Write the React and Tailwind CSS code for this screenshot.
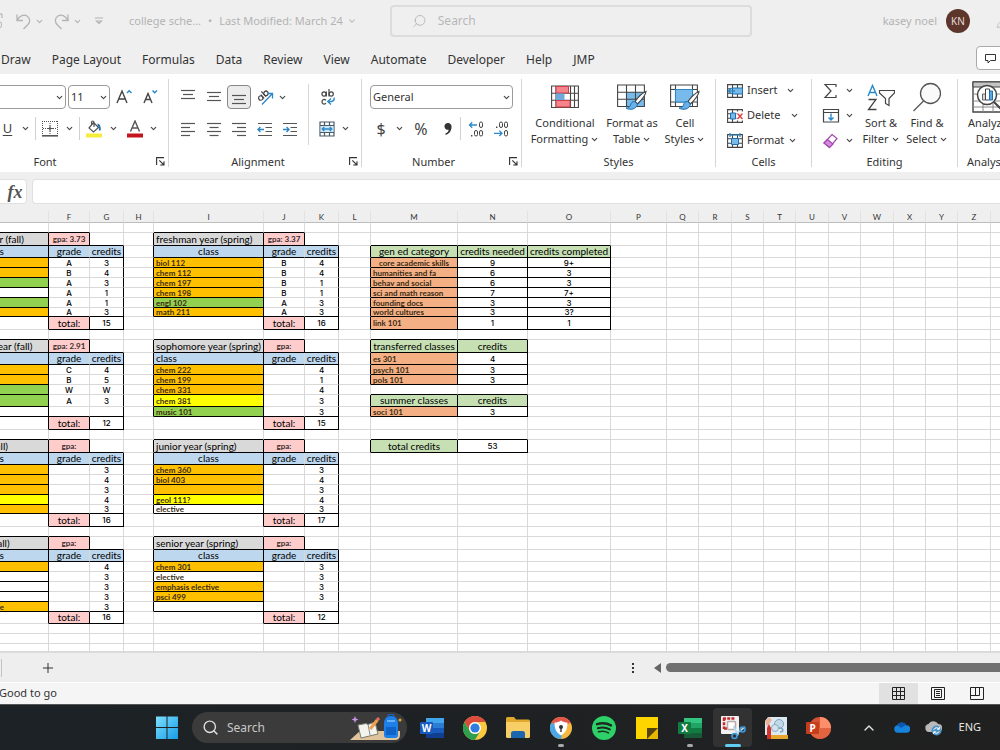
import React from "react";
import { ChevronDown, ChevronUp, Search, Plus, Pencil } from "lucide-react";

/* ---------- sheet data ---------- */

const COLUMNS = [
  ["E", 110], ["F", 41], ["G", 34], ["H", 30], ["I", 110], ["J", 41], ["K", 34], ["L", 32],
  ["M", 87], ["N", 70], ["O", 83], ["P", 56], ["Q", 32], ["R", 33], ["S", 32], ["T", 32],
  ["U", 33], ["V", 32], ["W", 33], ["X", 32], ["Y", 32], ["Z", 33], ["AA", 32],
];
const E = 0, I = 4, M = 8, N = 9, O = 10;

const ROW_HEIGHTS = [
  10, 13, 12, 10, 10, 10, 10, 10, 9, 13, 10, 13, 12, 10, 10, 10, 12, 10, 13, 10, 13,
  12, 10, 10, 10, 10, 9, 13, 10, 13, 12, 10, 10, 10, 10, 10, 12, 10, 10, 8,
];
const HEIGHT_CLASS = { 8: "h-[8px]", 9: "h-[9px]", 10: "h-[10px]", 12: "h-[12px]", 13: "h-[13px]" };

const FILL = {
  o: "bg-[#ffc000]", g: "bg-[#92d050]", y: "bg-[#ffff00]", w: "bg-white",
  grey: "bg-[#d9d9d9]", blue: "bg-[#bdd7ee]", pink: "bg-[#ffcccc]",
  mint: "bg-[#c6e0b4]", salmon: "bg-[#f4b084]",
};

const cells = {};
const put = (row, col, text, fill, edges, style) => {
  cells[row + ":" + col] = { text, fill: FILL[fill], edges, style };
};
const SMALL = "font-['Inter',sans-serif] text-[8px] leading-[8px] font-medium text-center";
const NAME = "text-[8px] leading-[8px] font-bold text-[#3a2c14]";
const SMALL_LEFT = NAME + " text-left pl-[2px]";
const TOTAL = "font-['Inter',sans-serif] text-[8px] leading-[11px] font-medium text-center";
const LARGE = "text-[10px] leading-[11px] text-center";
const LARGE_LEFT = "text-[10px] leading-[11px] text-left pl-[2px]";

function semester(row, col, title, gpa, classes, total, headLeft) {
  put(row, col, title, "grey", "tlrb", LARGE_LEFT);
  put(row, col + 1, gpa, "pink", "tlrb", "text-[8px] leading-[11px] font-bold text-[#3a2c2c] text-center");
  put(row + 1, col, "class", "blue", "tlrb", headLeft ? LARGE_LEFT : LARGE);
  put(row + 1, col + 1, "grade", "blue", "tb", LARGE);
  put(row + 1, col + 2, "credits", "blue", "trb", LARGE);
  classes.forEach(([name, fill, grade, credits], i) => {
    put(row + 2 + i, col, name, fill, "tlrb", SMALL_LEFT);
    put(row + 2 + i, col + 1, grade, "w", "l", SMALL);
    put(row + 2 + i, col + 2, credits, "w", "r", SMALL);
  });
  const end = row + 2 + classes.length;
  put(end, col + 1, "total:", "pink", "tlrb", LARGE);
  put(end, col + 2, total, "w", "tlrb", TOTAL);
}

semester(1, E, "freshman year (fall)", "gpa: 3.73", [
  ["", "o", "A", "3"], ["", "o", "B", "4"], ["", "g", "A", "3"],
  ["", "w", "A", "1"], ["", "g", "A", "1"], ["", "o", "A", "3"],
], "15");
semester(1, I, "freshman year (spring)", "gpa: 3.37", [
  ["biol 112", "o", "B", "4"], ["chem 112", "o", "B", "4"], ["chem 197", "o", "B", "1"],
  ["chem 198", "o", "B", "1"], ["engl 102", "g", "A", "3"], ["math 211", "o", "A", "3"],
], "16");
semester(11, E, "sophomore year (fall)", "gpa: 2.91", [
  ["", "o", "C", "4"], ["", "o", "B", "5"], ["", "g", "W", "W"], ["", "g", "A", "3"], ["", "w", "", ""],
], "12", true);
semester(11, I, "sophomore year (spring)", "gpa:", [
  ["chem 222", "o", "", "4"], ["chem 199", "o", "", "1"], ["chem 331", "o", "", "4"],
  ["chem 381", "y", "", "3"], ["music 101", "g", "", "3"],
], "15", true);
semester(20, E, "junior year (fall)", "gpa:", [
  ["", "o", "", "3"], ["", "o", "", "4"], ["", "o", "", "3"], ["", "y", "", "4"], ["", "o", "", "3"],
], "16");
semester(20, I, "junior year (spring)", "gpa:", [
  ["chem 360", "o", "", "3"], ["biol 403", "o", "", "4"], ["", "o", "", "3"],
  ["geol 111?", "y", "", "4"], ["elective", "w", "", "3"],
], "17");
semester(29, E, "senior year (fall)", "gpa:", [
  ["", "o", "", "4"], ["", "w", "", "3"], ["", "w", "", "3"], ["", "w", "", "3"],
  ["emphasis elective", "o", "", "3"],
], "16");
semester(29, I, "senior year (spring)", "gpa:", [
  ["chem 301", "o", "", "3"], ["elective", "w", "", "3"], ["emphasis elective", "o", "", "3"],
  ["psci 499", "o", "", "3"], ["", "w", "", ""],
], "12");

["gen ed category", "credits needed", "credits completed"].forEach((t, i) => put(2, M + i, t, "mint", "tlrb", LARGE));
[
  ["core academic skills", "9", "9+"], ["humanities and fa", "6", "3"], ["behav and social", "6", "3"],
  ["sci and math reason", "7", "7+"], ["founding docs", "3", "3"], ["world cultures", "3", "3?"], ["link 101", "1", "1"],
].forEach(([name, needed, done], i) => {
  put(3 + i, M, name, "salmon", "tlrb", i === 0 ? NAME + " text-center" : SMALL_LEFT);
  put(3 + i, N, needed, "w", "tlrb", SMALL);
  put(3 + i, O, done, "w", "tlrb", SMALL);
});
function creditList(row, title, items) {
  put(row, M, title, "mint", "tlrb", LARGE);
  put(row, N, "credits", "mint", "tlrb", LARGE);
  items.forEach(([name, credits], i) => {
    put(row + 1 + i, M, name, "salmon", "tlrb", SMALL_LEFT);
    put(row + 1 + i, N, credits, "w", "tlrb", SMALL);
  });
}
creditList(11, "transferred classes", [["es 301", "4"], ["psych 101", "3"], ["pols 101", "3"]]);
creditList(16, "summer classes", [["soci 101", "3"]]);
put(20, M, "total credits", "mint", "tlrb", LARGE);
put(20, N, "53", "w", "tlrb", TOTAL);

const has = (row, col, edge) => (cells[row + ":" + col]?.edges ?? "").includes(edge);

function Sheet() {
  return (
    <main className="overflow-hidden bg-white font-['Lato',sans-serif] text-black">
      <table className="-ml-[61px] w-[1062px] table-fixed border-separate border-spacing-0">
        <colgroup>
          {COLUMNS.map(([name, width]) => <col key={name} style={{ width }} />)}
        </colgroup>
        <thead>
          <tr>
            {COLUMNS.map(([name]) => (
              <th key={name} scope="col" className="h-[12px] border-r border-b border-r-[#e2e2e2] border-b-[#bdbdbd] bg-[#efefef] p-0 text-[8px] leading-[10px] font-normal text-[#333]">
                {name}
              </th>
            ))}
          </tr>
        </thead>
        <tbody>
          {ROW_HEIGHTS.map((height, r) => (
            <tr key={r}>
              {COLUMNS.map(([name], c) => {
                const cell = cells[r + ":" + c];
                const right = has(r, c, "r") || has(r, c + 1, "l") ? "border-r-black" : "border-r-[#d9d9d9]";
                const bottom = has(r, c, "b") || has(r + 1, c, "t") ? "border-b-black" : "border-b-[#d9d9d9]";
                return (
                  <td key={name} className={`overflow-hidden border-r border-b p-0 align-middle whitespace-nowrap ${HEIGHT_CLASS[height]} ${right} ${bottom} ${cell ? cell.fill + " " + cell.style : ""}`}>
                    {cell?.text}
                  </td>
                );
              })}
            </tr>
          ))}
        </tbody>
      </table>
    </main>
  );
}

/* ---------- shared pieces ---------- */

const Chev = ({ className = "" }) => <ChevronDown size={9} strokeWidth={3} className={`shrink-0 text-[#444] ${className}`} />;

const IconButton = ({ label, className, children }) => (
  <button type="button" aria-label={label} className={`flex h-[23px] shrink-0 items-center justify-center ${className}`}>{children}</button>
);
const More = ({ label, className = "w-[14px]" }) => <IconButton label={label + " options"} className={className}><Chev /></IconButton>;
const Rule = ({ className = "" }) => <span className={`h-[23px] w-px shrink-0 bg-[#d0d0d0] ${className}`} />;

const Launcher = ({ label }) => (
  <button type="button" aria-label={label} className="absolute right-[3px] bottom-px">
    <svg width="9" height="9" viewBox="0 0 9 9" fill="none" stroke="#333" strokeWidth="1.1">
      <path d="M.6 8V.6H8M3.3 3.3 8 8M8 4.2V8H4.2" />
    </svg>
  </button>
);

function Group({ name, className, launcher, children }) {
  return (
    <section aria-label={name} className={`relative my-[5px] flex shrink-0 flex-col border-r border-[#d6d6d6] ${className}`}>
      <div className="h-[76px] shrink-0">{children}</div>
      <h2 className="text-center text-[11px] leading-[14px] text-[#333]">{name}</h2>
      {launcher && <Launcher label={name + " settings"} />}
    </section>
  );
}

function BigButton({ icon, lines, chevron = true, className }) {
  return (
    <button type="button" className={`flex shrink-0 flex-col items-center text-[11px] leading-4 whitespace-nowrap text-[#333] ${className}`}>
      <span className="flex h-[36px] items-center justify-center">{icon}</span>
      <span>{lines[0]}</span>
      <span className="flex items-center gap-0.5">{lines[1]}{chevron && <Chev />}</span>
    </button>
  );
}

/* ---------- ribbon icons ---------- */

function Lines({ rows }) {
  return (
    <svg width="16" height="16" viewBox="0 0 16 16" stroke="#555" strokeWidth="1.2">
      {rows.map(([x1, x2, y]) => <path key={y} d={`M${x1} ${y}H${x2}`} />)}
    </svg>
  );
}
const full = [1, 15];
const short = { left: [1, 10], center: [3.5, 12.5], right: [6, 15] };
const para = (k) => [[...full, 2.5], [...short[k], 6.5], [...full, 10.5], [...short[k], 14.5]];

const Indent = ({ out }) => (
  <svg width="16" height="16" viewBox="0 0 16 16" fill="none" stroke="#555" strokeWidth="1.2">
    <path d="M1 2.5h14M8.5 6.5H15M8.5 10.5H15M1 14.5h14" />
    <path d={out ? "M7 8.5H1M3.4 6 1 8.5 3.4 11" : "M1 8.5h6M4.6 6 7 8.5 4.6 11"} stroke="#2b88c8" strokeWidth="1.4" />
  </svg>
);

const UndoIcon = () => (
  <svg width="17" height="17" viewBox="0 0 17 17" fill="none" stroke="currentColor" strokeWidth="1.3">
    <path d="M2 1.500v6h6M2 7.500C4.500 2.500 9 1 12.300 3.200c3 2 3 5.800.7 8.300L8.500 16" />
  </svg>
);
const BordersIcon = () => (
  <svg width="16" height="16" viewBox="0 0 16 16" fill="none" stroke="#555">
    <path d="M.5 0v14M15.500 0v14M0 .5h16" strokeDasharray="1 1" />
    <path d="M8 2v12" strokeDasharray="1 1" /><path d="M1 7.500h14" strokeDasharray="1 1" />
    <path d="M8 4.500v6M5 7.500h6" />
    <path d="M0 14.800h16" strokeWidth="1.600" />
  </svg>
);
const BucketIcon = () => (
  <svg width="18" height="18" viewBox="0 0 18 18" fill="none">
    <path d="m8.500 2.500 5 5-5 4.500-4.500-4 4.500-5.500ZM6.500 5V2.200c0-1.600 2.500-1.600 2.500 0V7" stroke="#555" strokeWidth="1.200" />
    <path d="M12.500 4.500c2.200.5 2.500 3 2.300 6" stroke="#1f6fad" strokeWidth="1.800" />
    <path d="M1 13.500h16v4H1z" fill="#f7ec3c" />
  </svg>
);
const FontColorIcon = () => (
  <svg width="18" height="18" viewBox="0 0 18 18" fill="none">
    <path d="M4.500 11.500 9 1l4.500 10.500M6 8h6" stroke="#555" strokeWidth="1.400" />
    <path d="M1 13.500h16v4H1z" fill="#c4161c" />
  </svg>
);
const FontSizeIcon = ({ up }) => (
  <svg width="18" height="18" viewBox="0 0 18 18" fill="none">
    <path d={up ? "M1 15 6 3l5 12M2.700 11h6.600" : "M3 15 7 5.500 11 15M4.400 11.500h5.200"} stroke="#444" strokeWidth="1.400" />
    <path d={up ? "m11 5 2.200-2.300L15.500 5" : "m11.500 2.500 2.200 2.300L16 2.500"} stroke="#2b88c8" strokeWidth="1.400" />
  </svg>
);
const OrientationIcon = () => (
  <svg width="18" height="18" viewBox="0 0 18 18" fill="none">
    <g stroke="#444" strokeWidth="1.200" transform="rotate(-42 7 8)">
      <circle cx="4" cy="8" r="2.200" /><path d="M6.300 5.500v5M8.800 3.500v7" /><circle cx="11" cy="8" r="2.200" />
    </g>
    <path d="m6 16.500 10-10.500M11.500 5.500h5v5" stroke="#2b88c8" strokeWidth="1.300" />
  </svg>
);
const WrapIcon = () => (
  <svg width="18" height="18" viewBox="0 0 18 18" fill="none" stroke="#444" strokeWidth="1.200">
    <circle cx="5" cy="6" r="2.100" /><path d="M7.300 3.500v5M10 1v7.500" /><circle cx="12.200" cy="6" r="2.100" />
    <path d="M7 12.200c-2.500-1.800-4 0-4 1.600s1.500 3.200 4 1.500" />
    <path d="M15 9.500c1 3-1.500 4.500-6 4M12 10.500l-3.200 3 3.200 3" stroke="#2b88c8" strokeWidth="1.400" />
  </svg>
);
const MergeIcon = () => (
  <svg width="16" height="16" viewBox="0 0 16 16" fill="none">
    <path d="M1 1h14v14H1zM1 4.500h14M1 11.500h14M5.500 1v3.500M10.500 1v3.500M5.500 11.500V15M10.500 11.500V15" stroke="#4a5a66" strokeWidth="1.200" />
    <path d="M1.600 5h12.800v6H1.600z" fill="#cfe8f8" />
    <path d="M3.500 8h9M5.300 6 3.200 8l2.100 2M10.700 6l2.100 2-2.100 2" stroke="#2b88c8" strokeWidth="1.300" />
  </svg>
);
const Zero = ({ x, y }) => <rect x={x} y={y} width="3" height="5.500" rx="1.500" stroke="#444" />;
const DecimalIcon = ({ more }) => (
  <svg width="16" height="16" viewBox="0 0 16 16" fill="none">
    {more ? (
      <><Zero x={11.5} y={1} /><Zero x={6.5} y={9.5} /><Zero x={11.5} y={9.5} /><path d="M3 14h1.400v1.400H3z" fill="#444" /></>
    ) : (
      <><Zero x={6.5} y={1} /><Zero x={11.5} y={1} /><Zero x={11.5} y={9.5} /><path d="M3 5.500h1.400v1.400H3z" fill="#444" /></>
    )}
    <path d={more ? "M9 4H1.500M4.200 1.300 1.500 4l2.700 2.700" : "M1 12.300h8M6.300 9.600 9 12.300 6.300 15"} stroke="#2b88c8" strokeWidth="1.300" />
  </svg>
);
const Brush = () => (
  <>
    <path d="M29 8.500c-4 1.500-8.500 6.500-11 10l2.500 2.500c3.500-3.500 8-8 8.500-12.500Z" fill="#fff" stroke="#444" strokeWidth="1.200" />
    <path d="M17.500 18.500c-2.500 0-3.500 1.500-4 3.500-.5 2-2.500 3-4.500 3 4 2.500 10.500 1.500 11.500-4Z" fill="#69b1e8" stroke="#1f6fad" />
  </>
);
const ConditionalIcon = () => (
  <svg width="28" height="24" viewBox="0 0 28 24" fill="none">
    <path d="M.6 1h26.800v21.500H.6zM.6 8.200h26.800M.6 15.300h26.800M5 1v21.500M19.500 1v21.500M23.500 1v21.500" stroke="#444" strokeWidth="1.100" />
    <path d="M5 1.500h12.500V8H5zM5 15.500h14V22H5z" fill="#f4858c" stroke="#d13c45" />
    <path d="M5 8.500h8.500V15H5z" fill="#6fa8dc" />
  </svg>
);
const TableStyleIcon = () => (
  <svg width="30" height="28" viewBox="0 0 30 28" fill="none">
    <path d="M10 9h17v14H10z" fill="#78bbeb" />
    <path d="M.6 2h26.800v21.500H.6zM.6 9.200h26.800M.6 16.300h26.800M9.500 2v21.500M18.500 2v21.500" stroke="#444" strokeWidth="1.100" />
    <Brush />
  </svg>
);
const CellStyleIcon = () => (
  <svg width="30" height="28" viewBox="0 0 30 28" fill="none">
    <path d="M.6 2h26.800v21.500H.6zM.6 6.500h26.800M.6 19h26.800M5.500 2v21.500M22.500 2v21.500" stroke="#444" strokeWidth="1.100" />
    <path d="M5.500 6.500h17V19h-17z" fill="#78bbeb" stroke="#2b88c8" />
    <Brush />
  </svg>
);
const CellIcon = ({ kind }) => (
  <svg width="16" height="16" viewBox="0 0 16 16" fill="none" className="shrink-0">
    <path d="M.6 1.600h14.800v12.800H.6zM.6 5.800h14.800M.6 10.200h14.800M5.500 1.600v12.800M10.500 1.600v12.800" stroke="#444" strokeWidth="1.100" />
    {kind === "insert" && <><path d="M5.500 5h10v6h-10z" fill="#78bbeb" stroke="#1f6fad" /><path d="M8 8H1.500M4.500 5 1.500 8l3 3" stroke="#2b88c8" strokeWidth="1.600" /></>}
    {kind === "delete" && <><path d="M9.500 3.500H16v9H9.500z" fill="#fff" /><path d="M3.500 5h5v6h-5z" fill="#78bbeb" stroke="#1f6fad" /><path d="m10.500 5.500 5 5.500m0-5.500-5 5.500" stroke="#e03a3a" strokeWidth="1.300" /></>}
    {kind === "format" && <><path d="M4.500 5.500h7v6h-7z" fill="#78bbeb" stroke="#1f6fad" /><path d="M3 0v4M13 0v4M3 2h10" stroke="#2b88c8" strokeWidth="1.200" /></>}
  </svg>
);
const SortIcon = () => (
  <svg width="28" height="27" viewBox="0 0 28 27" fill="none">
    <path d="M1 12 5.500 1.500 10 12M2.500 8.500h6" stroke="#2b88c8" strokeWidth="1.400" />
    <path d="M1.500 15.500H9L1.500 25.500H9.500" stroke="#444" strokeWidth="1.300" />
    <path d="M12.500 6.500h15v2.500l-5.500 5.500v7l-3.500-2v-5L12.500 9z" stroke="#444" strokeWidth="1.200" />
  </svg>
);
const FindIcon = () => (
  <svg width="28" height="30" viewBox="0 0 28 30" fill="none" stroke="#555" strokeWidth="1.300">
    <circle cx="17.500" cy="11.500" r="10" fill="#fafafa" /><path d="M10.500 19 0.500 29" />
  </svg>
);
const AnalyzeIcon = () => (
  <svg width="32" height="32" viewBox="0 0 32 32" fill="none">
    <path d="M1 1h30v30H1z" fill="#fff" stroke="#444" strokeWidth="1.400" />
    <path d="M1 1h30v5H1z" fill="#c4c4c4" stroke="#444" />
    <path d="M1 13h30M1 20h30M1 26h30M11 20v11M21 20v11" stroke="#888" />
    <circle cx="15" cy="14" r="9.500" fill="#fff" stroke="#444" strokeWidth="1.500" />
    <path d="m22 21 8 8" stroke="#444" strokeWidth="2" />
    <path d="M10.500 13h3v6h-3z" fill="#d8d8d8" stroke="#666" /><path d="M13.500 8h4v11h-4z" fill="#fff" stroke="#444" /><path d="M17.500 10h3v9h-3z" fill="#5aa6e0" stroke="#1f6fad" />
  </svg>
);

/* ---------- window parts ---------- */

function TitleBar() {
  return (
    <header className="flex h-[42px] items-center text-[12px] whitespace-nowrap text-[#b3b3b3]">
      <div className="flex w-[390px] shrink-0 items-center">
        <svg width="3" height="16" viewBox="0 0 3 16" fill="none" stroke="#aaa"><path d="M0 1h2v4M0 9c2 0 2 5 0 6" /></svg>
        <button type="button" aria-label="Undo" className="ml-[12px]"><UndoIcon /></button>
        <ChevronDown size={9} strokeWidth={3} className="ml-[3px]" />
        <button type="button" aria-label="Redo" className="ml-[9px] -scale-x-100"><UndoIcon /></button>
        <ChevronDown size={9} strokeWidth={3} className="ml-[3px]" />
        <button type="button" aria-label="Customize toolbar" className="ml-[13px]">
          <svg width="8" height="8" viewBox="0 0 8 8" fill="none" stroke="currentColor" strokeWidth="1.2"><path d="M0 1h8M1.500 4 4 6.500 6.500 4z" /></svg>
        </button>
        <button type="button" className="ml-[26px] flex items-center text-[11px]">
          <span>college sche...</span><span className="mx-[7px]">•</span><span>Last Modified: March 24</span>
          <ChevronDown size={10} strokeWidth={2.5} className="ml-1" />
        </button>
      </div>
      <label className="flex h-[32px] w-[362px] shrink-0 items-center rounded border-2 border-[#dcdcdc] pl-[20px]">
        <Search size={16} strokeWidth={1.4} className="-scale-x-100" />
        <input aria-label="Search" placeholder="Search" className="ml-[11px] w-full bg-transparent text-[12px] outline-none placeholder:text-[#b8b8b8]" />
      </label>
      <div className="ml-auto flex items-center">
        <span className="text-[11px]">kasey noel</span>
        <button type="button" className="ml-[9px] flex size-6 items-center justify-center rounded-full bg-[#5c352b] text-[10px] text-[#e8dcd8]">KN</button>
        <Pencil size={16} strokeWidth={1.2} className="-mr-3 ml-[26px]" />
      </div>
    </header>
  );
}

function MenuTabs() {
  return (
    <nav className="flex h-[32px] items-center overflow-hidden text-[12px] text-[#333]">
      <div className="flex shrink-0 gap-[21px] pt-[3px] pl-px whitespace-nowrap">
        {["Draw", "Page Layout", "Formulas", "Data", "Review", "View", "Automate", "Developer", "Help", "JMP"].map((t) => (
          <button key={t} type="button">{t}</button>
        ))}
      </div>
      <button type="button" aria-label="Comments" className="-mr-9 ml-auto flex h-[24px] w-[60px] shrink-0 items-center rounded border border-[#aaa] bg-white pl-2">
        <svg width="11" height="11" viewBox="0 0 11 11" fill="none" stroke="#333"><path d="M.5 1.500h10v6h-5l-2.500 2.500v-2.500H.5z" /></svg>
      </button>
    </nav>
  );
}

const selectBox = "block h-[24px] w-full appearance-none rounded border border-[#9a9a9a] bg-white pl-[2px] text-[11px] text-[#333]";

function DropDown({ label, value, className }) {
  return (
    <div className={`relative shrink-0 ${className}`}>
      <select aria-label={label} defaultValue={value} className={selectBox}><option>{value}</option></select>
      <Chev className="pointer-events-none absolute top-2 right-[2px]" />
    </div>
  );
}

function Ribbon() {
  return (
    <div className="flex h-[98px] overflow-hidden bg-white">
      <Group name="Font" className="w-[169px] [&>h2]:pr-[78px]" launcher>
        <div className="flex items-center pt-[6px]">
          <DropDown label="Font name" value="" className="-ml-2 w-[74px]" />
          <DropDown label="Font size" value="11" className="ml-[2px] w-[42px]" />
          <IconButton label="Increase font size" className="ml-[4px] w-[22px]"><FontSizeIcon up /></IconButton>
          <IconButton label="Decrease font size" className="ml-[3px] w-[22px]"><FontSizeIcon /></IconButton>
        </div>
        <div className="flex items-center pt-[8px]">
          <IconButton label="Underline" className="w-[15px] text-[13px] text-[#444] underline underline-offset-2">U</IconButton>
          <More label="Underline" className="w-[20px]" /><Rule />
          <IconButton label="Borders" className="w-[28px]"><BordersIcon /></IconButton><More label="Borders" className="w-[11px]" /><Rule className="ml-[4px]" />
          <IconButton label="Fill color" className="w-[28px]"><BucketIcon /></IconButton><More label="Fill color" className="w-[10px]" />
          <IconButton label="Font color" className="w-[34px]"><FontColorIcon /></IconButton><More label="Font color" className="w-[2px]" />
        </div>
      </Group>

      <Group name="Alignment" className="w-[193px] [&>h2]:pr-[14px]" launcher>
        <div className="flex">
          <div className="w-[139px] pt-[6px] pl-[6px]">
            <div className="flex items-center">
              <IconButton label="Top align" className="w-[26px]"><Lines rows={[[1, 15, 1.5], [3, 13, 5.5], [1, 15, 9.5]]} /></IconButton>
              <IconButton label="Middle align" className="w-[26px]"><Lines rows={[[1, 15, 3.5], [3, 13, 7.5], [1, 15, 11.5]]} /></IconButton>
              <button type="button" aria-label="Bottom align" className="flex h-[24px] w-[24px] items-center justify-center rounded border border-[#888] bg-[#ececec]"><Lines rows={[[1, 15, 6.5], [3, 13, 10.5], [1, 15, 14.5]]} /></button>
              <IconButton label="Orientation" className="ml-[3px] w-[22px]"><OrientationIcon /></IconButton><More label="Orientation" className="w-[12px]" />
            </div>
            <div className="flex items-center pt-[8px]">
              <IconButton label="Align left" className="w-[26px]"><Lines rows={para("left")} /></IconButton>
              <IconButton label="Center" className="w-[25px]"><Lines rows={para("center")} /></IconButton>
              <IconButton label="Align right" className="w-[26px]"><Lines rows={para("right")} /></IconButton>
              <IconButton label="Decrease indent" className="w-[25px]"><Indent out /></IconButton>
              <IconButton label="Increase indent" className="w-[26px]"><Indent /></IconButton>
            </div>
          </div>
          <span className="mt-[5px] h-[61px] w-px bg-[#d6d6d6]" />
          <div className="pt-[6px] pl-[7px]">
            <IconButton label="Wrap text" className="w-[24px]"><WrapIcon /></IconButton>
            <div className="flex pt-[9px]"><IconButton label="Merge cells" className="w-[22px]"><MergeIcon /></IconButton><More label="Merge cells" /></div>
          </div>
        </div>
      </Group>

      <Group name="Number" className="w-[160px] [&>h2]:pr-[16px]" launcher>
        <div className="pt-[6px] pl-[8px]">
          <DropDown label="Number format" value="General" className="w-[143px]" />
          <div className="flex items-center pt-[8px] text-[16px] text-[#444]">
            <IconButton label="Currency" className="w-[22px]">$</IconButton><More label="Currency" />
            <IconButton label="Percent" className="w-[30px]">%</IconButton>
            <IconButton label="Comma style" className="w-[24px]">
              <svg width="8" height="14" viewBox="0 0 8 14" fill="#333"><path d="M4 1a3.500 3.500 0 0 1 3.500 4C7.500 9 5 12 1.500 13V11.500C3.500 10.500 4.500 9.500 4.700 7.700A3.400 3.400 0 1 1 4 1Z" /></svg>
            </IconButton>
            <Rule className="mr-[2px]" />
            <IconButton label="Increase decimal" className="w-[25px]"><DecimalIcon more /></IconButton>
            <IconButton label="Decrease decimal" className="w-[26px]"><DecimalIcon /></IconButton>
          </div>
        </div>
      </Group>

      <Group name="Styles" className="w-[194px]">
        <div className="flex pl-[7px]">
          <BigButton icon={<ConditionalIcon />} lines={["Conditional", "Formatting"]} className="w-[72px]" />
          <BigButton icon={<TableStyleIcon />} lines={["Format as", "Table"]} className="w-[62px]" />
          <BigButton icon={<CellStyleIcon />} lines={["Cell", "Styles"]} className="w-[44px]" />
        </div>
      </Group>

      <Group name="Cells" className="w-[96px]">
        <div className="flex flex-col items-start pl-[11px] text-[11px] text-[#333]">
          {[["Insert", "insert", "w-[68px]"], ["Delete", "delete", "w-[72px]"], ["Format", "format", "w-[68px]"]].map(([text, kind, width]) => (
            <button key={kind} type="button" className={`flex h-[25px] items-center gap-1 pb-0.5 ${width}`}>
              <CellIcon kind={kind} /><span>{text}</span><Chev className="ml-auto" />
            </button>
          ))}
        </div>
      </Group>

      <Group name="Editing" className="w-[146px]">
        <div className="flex">
          <div className="flex w-[46px] flex-col pl-[10px]">
            <button type="button" aria-label="AutoSum" className="flex h-[25px] items-center gap-[5px] pb-0.5">
              <svg width="18" height="16" viewBox="0 0 18 16" fill="none" stroke="#444" strokeWidth="1.200"><path d="M14 4V1.500H3L9 8l-6 6.500h11V12" /></svg><Chev />
            </button>
            <button type="button" aria-label="Fill" className="flex h-[25px] items-center gap-[5px] pb-0.5">
              <svg width="18" height="16" viewBox="0 0 18 16" fill="none"><path d="M1.500 1.500h15v12.500h-15zM1.500 4.500h15" stroke="#444" strokeWidth="1.200" /><path d="M9 5.500V12M6.500 9.500 9 12l2.500-2.500" stroke="#2b88c8" strokeWidth="1.400" /></svg><Chev />
            </button>
            <button type="button" aria-label="Clear" className="flex h-[25px] items-center gap-[5px] pb-0.5">
              <svg width="18" height="16" viewBox="0 0 18 16" fill="none" stroke="#a347ae" strokeWidth="1.200"><path d="M10 1.500 15 5.500 7.500 14.500 2 10z" fill="#fff" /><path d="M5.500 6.500 11 11 7.500 14.500 2 10z" fill="#d28cdb" /></svg><Chev />
            </button>
          </div>
          <BigButton icon={<SortIcon />} lines={["Sort &", "Filter"]} className="w-[46px]" />
          <BigButton icon={<FindIcon />} lines={["Find &", "Select"]} className="w-[46px]" />
        </div>
      </Group>

      <Group name="Analysis" className="w-[60px] border-r-0">
        <BigButton icon={<AnalyzeIcon />} lines={["Analyze", "Data"]} chevron={false} className="w-[60px]" />
      </Group>
    </div>
  );
}

function FormulaBar() {
  return (
    <div className="flex h-[39px] items-center gap-[5px]">
      <button type="button" aria-label="Insert function" className="h-[25px] w-[27px] rounded-r border border-l-0 border-[#e0e0e0] bg-white pl-1 font-['Liberation_Serif',serif] text-[18px] leading-5 font-bold text-[#555] italic">fx</button>
      <input aria-label="Formula" className="h-[25px] min-w-0 flex-1 rounded-l border border-r-0 border-[#e0e0e0] bg-white outline-none" />
    </div>
  );
}

function BottomBars() {
  return (
    <>
      <div className="flex h-[30px] items-center border-t border-[#dcdcdc] bg-[#eee]">
        <span className="ml-px h-[18px] w-px bg-[#c4c4c4]" />
        <button type="button" aria-label="New sheet" className="ml-[38px]"><Plus size={16} strokeWidth={1.5} className="text-[#333]" /></button>
        <span className="ml-auto flex flex-col gap-[2px]"><i className="size-[2px] bg-[#333]" /><i className="size-[2px] bg-[#333]" /><i className="size-[2px] bg-[#333]" /></span>
        <svg className="ml-[20px]" width="7" height="10" viewBox="0 0 7 10"><path d="M7 0v10L0 5z" fill="#666" /></svg>
        <span className="ml-[5px] h-[9px] w-[334px] rounded-l-full bg-[#707070]" />
      </div>
      <footer className="flex h-[22px] items-center border-t border-white bg-[#f5f5f5] text-[11px] text-[#333]">
        <span className="-ml-px">Good to go</span>
        <div className="ml-auto flex h-full pr-[3px]">
          <button type="button" aria-label="Normal view" className="flex w-[39px] items-center justify-center bg-[#e1e1e1]">
            <svg width="13" height="13" viewBox="0 0 13 13" fill="none" stroke="#222"><path d="M.5.5h12v12H.5zM.5 4.500h12M.5 8.500h12M4.500.5v12M8.500.5v12" /></svg>
          </button>
          <button type="button" aria-label="Page layout view" className="flex w-[39px] items-center justify-center">
            <svg width="14" height="13" viewBox="0 0 14 13" fill="none" stroke="#222"><path d="M.5.5h13v12H.5zM3.500 2.500h7v8h-7zM5 4.500h4M5 6.500h4M5 8.500h4" /></svg>
          </button>
          <button type="button" aria-label="Page break view" className="flex w-[40px] items-center justify-center">
            <svg width="14" height="13" viewBox="0 0 14 13" fill="none" stroke="#222"><path d="M.5.5h13v12H.5zM.5 8.500h9v-8M5.500.5v8" /></svg>
          </button>
        </div>
      </footer>
    </>
  );
}

/* ---------- taskbar ---------- */

const OfficeIcon = ({ letter, tones, tile }) => (
  <svg width="26" height="24" viewBox="0 0 26 24">
    <path d="M7 2h18v5H7z" fill={tones[0]} /><path d="M7 7h18v5H7z" fill={tones[1]} />
    <path d="M7 12h18v5H7z" fill={tones[2]} /><path d="M7 17h18v5H7z" fill={tones[3]} />
    <rect x="1" y="6" width="13" height="12" rx="1" fill={tile} />
    <text x="7.500" y="15.500" fontSize="10" fontWeight="700" fill="#fff" textAnchor="middle">{letter}</text>
  </svg>
);
const ChromeIcon = () => (
  <svg width="24" height="24" viewBox="0 0 24 24">
    <circle cx="12" cy="12" r="12" fill="#fbc93d" />
    <path d="M1.600 6A12 12 0 0 1 22.400 6H12a6 6 0 0 0-5.200 9z" fill="#dd4b3e" />
    <path d="M1.600 6A12 12 0 0 0 12 24l5.200-9a6 6 0 0 1-10.400 0z" fill="#2f9e4f" />
    <circle cx="12" cy="12" r="6" fill="#fff" /><circle cx="12" cy="12" r="4.600" fill="#2f7de1" />
  </svg>
);
const FolderIcon = () => (
  <svg width="24" height="22" viewBox="0 0 24 22">
    <path d="M0 1.500Q0 0 1.500 0H8l2 2.500h12.500Q24 2.500 24 4v16H0z" fill="#e0a92e" /><path d="M0 5h24v14.500q0 1.500-1.500 1.500h-21Q0 21 0 19.500z" fill="#f7cf66" />
    <path d="M5 21v-4.500Q5 14 7.500 14h9q2.500 0 2.500 2.500V21z" fill="#1c66b0" />
  </svg>
);
const VaultIcon = () => (
  <svg width="22" height="22" viewBox="0 0 22 22">
    <circle cx="11" cy="11" r="11" fill="#f5b840" /><path d="M1.500 5.500A11 11 0 0 1 20.500 5.500L11 11z" fill="#e2554a" /><path d="M1.500 5.500A11 11 0 0 0 11 22l2-9z" fill="#4aa7e8" />
    <path d="M11 3.500c2 1.500 4 2 6.500 2 0 6-1.500 10-6.500 13-5-3-6.500-7-6.500-13 2.500 0 4.500-.5 6.500-2Z" fill="#fff" /><circle cx="11" cy="10" r="2" fill="#333" /><path d="M10.300 11h1.400v4h-1.400z" fill="#333" />
  </svg>
);
const SpotifyIcon = () => (
  <svg width="24" height="24" viewBox="0 0 24 24" fill="none" stroke="#1c2b20" strokeLinecap="round">
    <circle cx="12" cy="12" r="12" fill="#2ed168" stroke="none" />
    <path d="M5 8.200c5-1.500 10-1 14 1.200" strokeWidth="2.400" /><path d="M5.800 12.200c4-1.200 8.500-.8 12 1.200" strokeWidth="2" /><path d="M6.500 15.800c3.500-.9 7-.5 10 1.100" strokeWidth="1.600" />
  </svg>
);
const NotesIcon = () => (
  <svg width="22" height="22" viewBox="0 0 22 22"><path d="M0 0h22v22H0z" fill="#ffd500" /><path d="M11 11h11v11H11z" fill="#e8b800" /><path d="M11 11h11L11 22z" fill="#54430f" /></svg>
);
const SnipIcon = () => (
  <svg width="26" height="26" viewBox="0 0 26 26" fill="none">
    <rect x="1" y="1" width="18" height="18" rx="1" fill="#f2f2f2" />
    <path d="M3 3.500h12M4 3v11M4 13.500h3" stroke="#c62a2a" strokeWidth="2.500" strokeDasharray="3 1.200" />
    <rect x="7.500" y="6.500" width="8" height="8" rx="1" fill="#fff" stroke="#b9a9a9" strokeWidth="1.500" />
    <path d="M13.500 11 18 20.500M25 12l-9.500 7" stroke="#b8d8ee" strokeWidth="1.800" /><circle cx="14.500" cy="21" r="2.500" stroke="#3d9be0" strokeWidth="1.600" /><circle cx="22.500" cy="14.500" r="2.500" stroke="#3d9be0" strokeWidth="1.600" />
  </svg>
);
const PaintIcon = () => (
  <svg width="24" height="24" viewBox="0 0 24 24" fill="none">
    <path d="M4 1h19v18H1V5z" fill="#dbe9f3" /><circle cx="15" cy="8" r="4.500" fill="#c3d9e8" stroke="#7fa3bd" /><circle cx="11" cy="12" r="3.500" fill="#d3e3ee" stroke="#8caec4" /><path d="M15 12c5 0 5 4 1 4" stroke="#7ea4bf" strokeWidth="1.500" />
    <path d="M1 5 5 1l3 3-5 7z" fill="#e8b49b" /><path d="M3 12 5 8l2 4v11H3z" fill="#d3322b" /><path d="M7 19h17v4H7z" fill="#e6a62c" />
  </svg>
);
const PptIcon = () => (
  <svg width="25" height="24" viewBox="0 0 25 24">
    <circle cx="14" cy="12" r="11" fill="#d65234" /><path d="M14 1a11 11 0 0 1 11 11H14z" fill="#ff8f6b" /><path d="M14 12h11a11 11 0 0 1-20 6z" fill="#e2633f" />
    <rect x="0" y="6" width="13" height="12" rx="1" fill="#c43e1c" /><text x="6.500" y="15.500" fontSize="10" fontWeight="700" fill="#fff" textAnchor="middle">P</text>
  </svg>
);
const Cloud = "M5 12a4 4 0 0 1-.5-7.900A5.500 5.500 0 0 1 14 4a4 4 0 0 1 .5 8z";

function TaskItem({ label, active, open, children }) {
  return (
    <button type="button" aria-label={label} className={`relative flex h-[39px] w-[39px] shrink-0 items-center justify-center rounded ${active ? "bg-[#323232]" : ""}`}>
      {children}
      {active && <span className="absolute bottom-0 h-[3px] w-4 rounded-full bg-[#60cdf0]" />}
      {open && <span className="absolute bottom-0 h-[3px] w-[6px] rounded-full bg-[#a8a8a8]" />}
    </button>
  );
}

function Taskbar() {
  return (
    <nav aria-label="Taskbar" className="flex h-[46px] items-center overflow-hidden border-t border-[#555] bg-linear-to-r from-[#1c2226] to-[#202020]">
      <button type="button" aria-label="Start" className="ml-[155px] shrink-0">
        <svg width="24" height="24" viewBox="0 0 24 24">
          <defs><linearGradient id="win" x1="0" y1="0" x2="1" y2="1"><stop offset="0" stopColor="#7ee0fb" /><stop offset="1" stopColor="#159be8" /></linearGradient></defs>
          <path d="M1 .5h10.500V11H1zM12.500.5H23V11H12.500zM1 12h10.500v11H1zM12.500 12H23v11H12.500z" fill="url(#win)" />
        </svg>
      </button>
      <label className="ml-[13px] flex h-[31px] w-[215px] shrink-0 items-center rounded-full bg-[#3b3b3b] pl-[10px]">
        <Search size={17} strokeWidth={2} className="shrink-0 text-[#ddd]" />
        <input aria-label="Search taskbar" placeholder="Search" className="ml-2 min-w-0 flex-1 bg-transparent text-[12px] text-white outline-none placeholder:text-[#c8c8c8]" />
        <svg className="mr-[3px] shrink-0" width="54" height="28" viewBox="0 0 54 28">
          <path d="M0 26 10 17h40v4q0 5-5 5z" fill="#e2c49c" />
          <path d="m8 11 8-1.500 2 1 7-2.500 3 12-17 4z" fill="#f4f4ee" stroke="#777c70" strokeWidth="1" /><path d="m18 10 2 11" stroke="#888" />
          <path d="m19 14 7-9 2.500 2-7 9z" fill="#eea04c" /><path d="m26 5 2-2 2 2-1.500 2z" fill="#ed6b6b" />
          <path d="M34 10q0-8 7-8t7 8v11q0 3-3 3h-8q-3 0-3-3z" fill="#1e80e6" /><path d="M38 3q0-3 3-3t3 3" stroke="#1862c2" fill="none" strokeWidth="1.500" /><path d="M36 13h10v8H36z" fill="#0f62c8" /><path d="M37 7h8" stroke="#7ec0ff" strokeWidth="1.500" />
          <path d="m5 2 1 2.500L8.500 5.500 6 6.500 5 9 4 6.500 1.500 5.500 4 4.500z" fill="#c992e8" /><circle cx="50" cy="6" r="1.500" fill="#e8a72b" />
        </svg>
      </label>
      <div className="ml-[5px] flex shrink-0 gap-1">
        <TaskItem label="Word"><OfficeIcon letter="W" tile="#185abd" tones={["#41a5ee", "#2b7cd3", "#185abd", "#103f91"]} /></TaskItem>
        <TaskItem label="Chrome"><ChromeIcon /></TaskItem>
        <TaskItem label="File Explorer"><FolderIcon /></TaskItem>
        <TaskItem label="Secure browser" open><VaultIcon /></TaskItem>
        <TaskItem label="Spotify"><SpotifyIcon /></TaskItem>
        <TaskItem label="Sticky Notes"><NotesIcon /></TaskItem>
        <TaskItem label="Excel" open><OfficeIcon letter="X" tile="#107c41" tones={["#33c481", "#21a366", "#107c41", "#185c37"]} /></TaskItem>
        <TaskItem label="Snipping Tool" active><SnipIcon /></TaskItem>
        <TaskItem label="Paint"><PaintIcon /></TaskItem>
        <TaskItem label="PowerPoint"><PptIcon /></TaskItem>
      </div>
      <div className="ml-auto flex shrink-0 items-center text-[11px] text-[#e4e4e4]">
        <button type="button" aria-label="Show hidden icons"><ChevronUp size={16} /></button>
        <svg className="ml-[16px]" width="17" height="13" viewBox="0 0 18 13"><path d={Cloud} fill="#1683dd" /><path d="M4.500 4.100A5.500 5.500 0 0 1 14 4q-4 1-5 3z" fill="#0b58b0" /></svg>
        <svg className="ml-[14px]" width="18" height="16" viewBox="0 0 18 16" fill="none"><path d={Cloud} fill="#b9b9b9" /><circle cx="12.500" cy="10.500" r="5" fill="#4d93c4" /><path d="M9.800 9.700a3 3 0 0 1 5.200-.7M15.200 11.300a3 3 0 0 1-5.200.7M15.300 7v2.200h-2.200M9.700 14v-2.200h2.200" stroke="#fff" /></svg>
        <span className="mr-[19px] ml-[17px]">ENG</span>
      </div>
    </nav>
  );
}

export default function App() {
  return (
    <div className="flex min-h-screen flex-col overflow-hidden bg-[#efefef] font-['Noto_Sans',sans-serif]">
      <TitleBar />
      <MenuTabs />
      <Ribbon />
      <FormulaBar />
      <Sheet />
      <BottomBars />
      <Taskbar />
    </div>
  );
}
